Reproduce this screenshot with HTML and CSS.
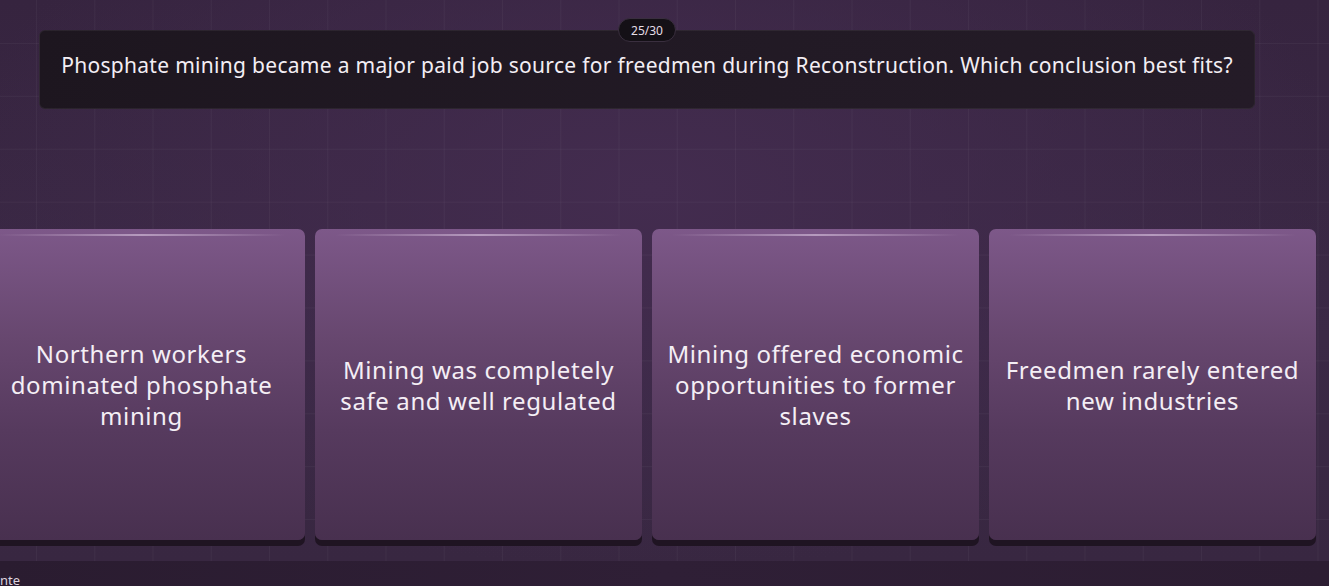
FILE: index.html
```html
<!DOCTYPE html>
<html lang="en">
<head>
<meta charset="utf-8">
<title>Quiz</title>
<link rel="stylesheet" href="styles.css">
</head>
<body>
<div class="stage">
  <div class="grid"></div>
  <div class="top">
    <div class="counter">25/30</div>
    <div class="question">Phosphate mining became a major paid job source for freedmen during Reconstruction. Which conclusion best fits?</div>
  </div>
  <div class="answers">
    <div class="card"><span>Northern workers dominated phosphate mining</span></div>
    <div class="card"><span>Mining was completely safe and well regulated</span></div>
    <div class="card"><span>Mining offered economic opportunities to former slaves</span></div>
    <div class="card"><span>Freedmen rarely entered new industries</span></div>
  </div>
</div>
<div class="footer"><span class="footer-text">Quizlet Plante</span></div>
</body>
</html>
```

FILE: styles.css
```css
* { box-sizing: border-box; }
html, body { margin: 0; padding: 0; }
body {
  width: 1329px;
  height: 586px;
  overflow: hidden;
  font-family: "Noto Sans", "Open Sans", sans-serif;
  background: #34233c;
}
.stage {
  position: relative;
  height: 561px;
  background:
    radial-gradient(ellipse 700px 380px at 650px 190px, #432c4f 0%, rgba(67,44,79,0) 100%),
    linear-gradient(180deg, #36243f 0%, #3b2946 60%, #382741 100%);
  overflow: hidden;
}
.grid {
  position: absolute;
  inset: 0;
  background-image:
    linear-gradient(to right, rgba(255,255,255,0.035) 1px, transparent 1px),
    linear-gradient(to bottom, rgba(255,255,255,0.035) 1px, transparent 1px);
  background-size: 58.25px 52.9px;
  background-position: 36px 43px;
  pointer-events: none;
}
.top {
  position: relative;
  display: flex;
  flex-direction: column;
  align-items: center;
  padding-top: 18px;
  width: 1294px;
}
.counter {
  position: relative;
  z-index: 2;
  height: 24px;
  width: 58px;
  border-radius: 12px;
  background: #141016;
  border: 1px solid #3a2f3f;
  color: #e4dde6;
  font-size: 12px;
  display: flex;
  align-items: center;
  justify-content: center;
  margin-bottom: -12px;
}
.question {
  width: 1216px;
  height: 79px;
  background: linear-gradient(100deg, #1d161f 0%, #221a25 60%, #241b27 100%);
  border: 1px solid rgba(255,255,255,0.06);
  border-radius: 6px;
  color: #f3eef4;
  font-size: 21px;
  line-height: 28px;
  letter-spacing: 0.3px;
  display: flex;
  justify-content: center;
  padding-top: 20px;
}
.answers {
  position: relative;
  display: flex;
  gap: 10px;
  margin-left: -22px;
  margin-top: 120px;
}
.card {
  flex: 0 0 327px;
  height: 311px;
  border-radius: 7px;
  background: linear-gradient(180deg, #7d5889 0%, #67476f 35%, #563a5e 65%, #48304f 100%);
  box-shadow: 0 6px 0 #1f1422;
  display: flex;
  align-items: center;
  justify-content: center;
  text-align: center;
  padding: 0 12px;
  position: relative;
  color: #f4eef5;
  font-size: 24px;
  line-height: 31px;
  letter-spacing: 0.6px;
}
.card::before {
  content: "";
  position: absolute;
  top: 5px;
  left: 20px;
  right: 20px;
  height: 2px;
  background: linear-gradient(90deg, rgba(255,255,255,0) 0%, rgba(230,210,235,0.55) 50%, rgba(255,255,255,0) 100%);
}
.footer {
  height: 25px;
  background: linear-gradient(90deg, #2a1c30 0%, #2f1f36 50%, #2c1d32 100%);
  overflow: hidden;
  position: relative;
}
.footer-text {
  position: absolute;
  right: calc(100% - 20px);
  top: 10px;
  white-space: nowrap;
  color: #ddd4df;
  font-family: "Noto Sans", sans-serif;
  font-size: 13px;
}
```
